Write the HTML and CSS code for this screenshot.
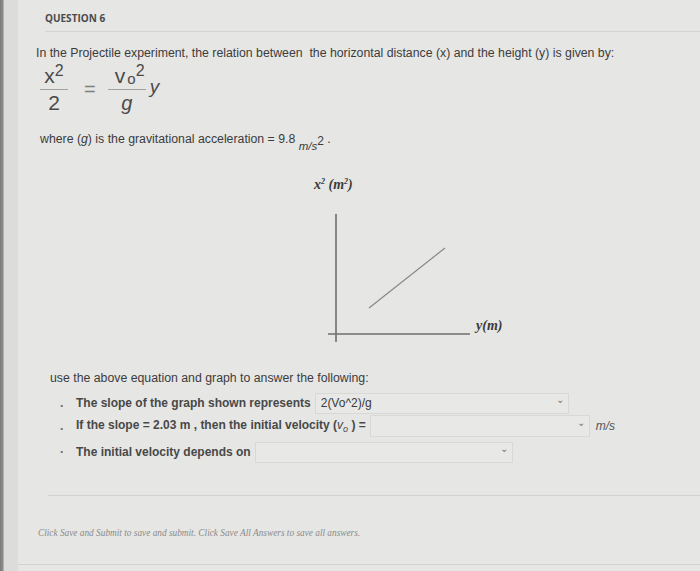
FILE: index.html
```html
<!DOCTYPE html>
<html>
<head>
<meta charset="utf-8">
<link rel="stylesheet" href="styles.css">
</head>
<body>
<div class="frame">
  <div class="edge"></div>
  <div class="content">
    <div class="qhead">QUESTION 6</div>
    <p class="intro">In the Projectile experiment, the relation between&nbsp; the horizontal distance (x) and the height (y) is given by:</p>
    <div class="eq">
      <div class="frac f1">
        <div class="num">x<sup>2</sup></div>
        <div class="den">2</div>
      </div>
      <div class="equals">=</div>
      <div class="frac f2">
        <div class="num">v<sub>o</sub><sup class="sq">2</sup></div>
        <div class="den g">g</div>
      </div>
      <div class="yv">y</div>
    </div>
    <p class="where">where (<i class="gi">g</i>) is the gravitational acceleration = 9.8 <span class="unit"><i>m/s</i><sup>2</sup></span> .</p>
    <div class="graph">
      <svg width="230" height="180" viewBox="0 0 230 180">
        <text x="14" y="27" class="glabel">x<tspan dy="-5" font-size="8">2</tspan><tspan dy="5"> (m</tspan><tspan dy="-5" font-size="8">2</tspan><tspan dy="5">)</tspan></text>
        <line x1="36" y1="52" x2="36" y2="180" stroke="#6e6e6e" stroke-width="1.6"/>
        <line x1="28" y1="172" x2="170" y2="172" stroke="#6e6e6e" stroke-width="1.6"/>
        <line x1="69" y1="146" x2="145" y2="86" stroke="#888" stroke-width="1.2"/>
        <text x="176" y="168" class="glabel">y(m)</text>
      </svg>
    </div>
    <p class="use">use the above equation and graph to answer the following:</p>
    <ul class="qs">
      <li class="r1"><span class="bul">.</span><span class="lbl">The slope of the graph shown represents</span><span class="sel s1"><span class="val">2(Vo^2)/g</span><span class="chev">&#8964;</span></span></li>
      <li class="r2"><span class="bul">.</span><span class="lbl">If the slope = 2.03 m , then the initial velocity (<i class="vo">v<sub>o</sub></i> ) =</span><span class="sel s2"><span class="val"></span><span class="chev">&#8964;</span></span><span class="ms">m/s</span></li>
      <li class="r3"><span class="bul">&#183;</span><span class="lbl">The initial velocity depends on</span><span class="sel s3"><span class="val"></span><span class="chev">&#8964;</span></span></li>
    </ul>
    <div class="rule rule-top"></div>
    <div class="footer">Click Save and Submit to save and submit. Click Save All Answers to save all answers.</div>
    <div class="rule rule-bottom"></div>
  </div>
</div>
</body>
</html>
```
FILE: styles.css
```css
html, body {
  margin: 0;
  padding: 0;
  background: #e4e4e2;
}
.frame {
  display: flex;
  width: 700px;
  height: 571px;
  overflow: hidden;
  background: #e6e6e4;
}
.edge {
  width: 4px;
  flex: none;
  background: linear-gradient(to right, #7a7a7a 0, #8e8e8e 3px, #cfcfcd 4px);
  border-right: 14px solid #dcdcda;
}
.content {
  flex: 1;
  font-family: "Liberation Sans", Arial, sans-serif;
  color: #3a3a3a;
}
.qhead {
  margin: 11px 0 0 27px;
  font-family: "Open Sans", "Liberation Sans", sans-serif;
  font-weight: 700;
  font-size: 10px;
  line-height: 14px;
  color: #4a4a4a;
  padding-bottom: 6px;
  border-bottom: 1px solid #d4d4d2;
}
.intro {
  margin: 13px 0 0 18px;
  font-size: 12.3px;
  line-height: 16px;
  color: #3c3c3c;
}
.eq {
  display: flex;
  align-items: center;
  margin: 2px 0 0 22px;
  height: 53px;
  color: #4a4a4a;
  font-size: 21px;
}
.frac {
  display: flex;
  flex-direction: column;
  align-items: center;
}
.frac .num {
  line-height: 26px;
  height: 26px;
  padding: 0 2px;
  white-space: nowrap;
}
.frac sup, .frac sub { line-height: 0; }
.frac .den {
  line-height: 26px;
  height: 26px;
  border-top: 1px solid #a0a0a0;
  align-self: stretch;
  text-align: center;
}
.f1 { width: 28px; }
.f1 sup { font-size: 16px; vertical-align: 7px; }
.equals {
  margin: 0 12px 0 16px;
  color: #808080;
  font-size: 20px;
}
.f2 { width: 38px; }
.f2 .num { margin-left: 6px; }
.f2 sub { font-size: 15px; vertical-align: -1px; margin-left: 2px; }
.f2 .sq { font-size: 16px; vertical-align: 7px; margin-left: 0; }
.den.g { font-style: italic; font-size: 20px; }
.yv {
  margin: 0 0 6px 4px;
  font-style: italic;
  font-size: 19px;
}
.where {
  margin: 15px 0 0 22px;
  font-size: 12.3px;
  line-height: 16px;
  color: #3c3c3c;
}
.gi { font-style: italic; }
.unit {
  display: inline-block;
  vertical-align: -7px;
  font-size: 11.5px;
}
.unit sup { font-size: 12px; vertical-align: 5px; }
.graph {
  margin: 8px 0 0 282px;
  height: 180px;
}
.graph svg { display: block; }
.glabel {
  font-family: "Liberation Serif", "Times New Roman", serif;
  font-style: italic;
  font-weight: 700;
  font-size: 14px;
  fill: #3a3a3a;
}
.use {
  margin: 28px 0 0 32px;
  font-size: 12.3px;
  line-height: 16px;
  color: #3c3c3c;
}
.qs {
  list-style: none;
  margin: 6px 0 0 0;
  padding: 0;
}
.qs li {
  display: flex;
  align-items: center;
  font-size: 12px;
  font-weight: 700;
  color: #484848;
}
.bul {
  width: 16px;
  margin-left: 42px;
  font-weight: 700;
  color: #666;
}
.r1 { height: 22px; }
.r2 { height: 24px; }
.r3 { height: 28px; }
.lbl { white-space: nowrap; }
.vo { font-weight: 400; font-style: italic; }
.vo sub { font-size: 9px; }
.sel {
  display: flex;
  align-items: center;
  justify-content: space-between;
  box-sizing: border-box;
  border: 1px solid #d8d8d6;
  background: #e8e8e6;
  font-weight: 400;
  color: #3a3a3a;
  font-size: 12px;
  padding: 0 4px 0 5px;
}
.s1 { width: 254px; height: 21px; margin-left: 4px; }
.s2 { width: 220px; height: 22px; margin-left: 4px; }
.s3 { width: 258px; height: 21px; margin-left: 4px; }
.chev {
  font-size: 10px;
  color: #777;
  line-height: 10px;
  margin-top: -6px;
}
.ms {
  margin-left: 6px;
  font-style: italic;
  font-weight: 400;
  color: #555;
  font-size: 12px;
}
.rule {
  height: 1px;
  background: #d2d2d0;
  margin-left: 30px;
}
.rule-top { margin-top: 29px; }
.footer {
  margin: 31px 0 0 20px;
  font-family: "Liberation Serif", "Times New Roman", serif;
  font-style: italic;
  font-size: 9.3px;
  line-height: 12px;
  color: #8a8a8a;
}
.rule-bottom { margin-top: 25px; margin-left: 0; }
```
